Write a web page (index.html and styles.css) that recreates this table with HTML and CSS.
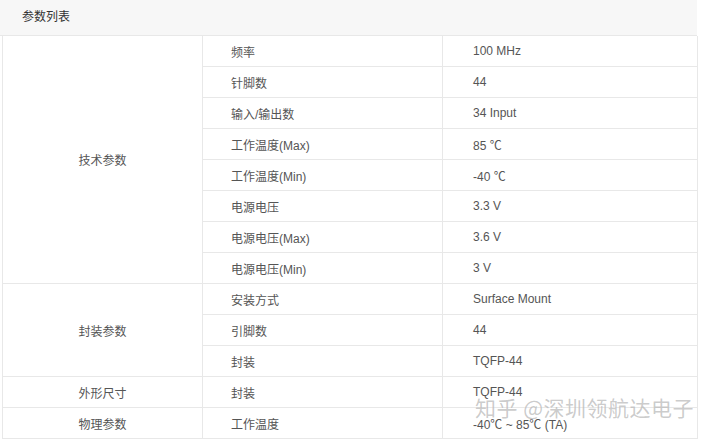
FILE: index.html
```html
<!DOCTYPE html>
<html lang="zh">
<head>
<meta charset="utf-8">
<title>参数列表</title>
<link rel="stylesheet" href="styles.css">
</head>
<body>
<div class="page">
  <div class="panel-head">参数列表</div>
  <table class="params">
    <colgroup>
      <col class="c1"><col class="c2"><col class="c3">
    </colgroup>
    <tbody>
      <tr><td class="group" rowspan="8">技术参数</td><td class="name">频率</td><td class="val">100 MHz</td></tr>
      <tr><td class="name">针脚数</td><td class="val">44</td></tr>
      <tr><td class="name">输入/输出数</td><td class="val">34 Input</td></tr>
      <tr><td class="name">工作温度(Max)</td><td class="val">85 ℃</td></tr>
      <tr><td class="name">工作温度(Min)</td><td class="val">-40 ℃</td></tr>
      <tr><td class="name">电源电压</td><td class="val">3.3 V</td></tr>
      <tr><td class="name">电源电压(Max)</td><td class="val">3.6 V</td></tr>
      <tr><td class="name">电源电压(Min)</td><td class="val">3 V</td></tr>
      <tr><td class="group" rowspan="3">封装参数</td><td class="name">安装方式</td><td class="val">Surface Mount</td></tr>
      <tr><td class="name">引脚数</td><td class="val">44</td></tr>
      <tr><td class="name">封装</td><td class="val">TQFP-44</td></tr>
      <tr><td class="group">外形尺寸</td><td class="name">封装</td><td class="val">TQFP-44</td></tr>
      <tr><td class="group">物理参数</td><td class="name">工作温度</td><td class="val">-40℃ ~ 85℃ (TA)</td></tr>
    </tbody>
  </table>
  <div class="watermark">知乎 @深圳领航达电子</div>
</div>
</body>
</html>
```
FILE: styles.css
```css
html, body {
  margin: 0;
  padding: 0;
  background: #fff;
}
body {
  font-family: "Liberation Sans", "Noto Sans CJK SC", sans-serif;
  font-size: 12px;
  color: #555;
}
.page {
  position: relative;
  width: 706px;
  height: 440px;
  overflow: hidden;
}
.panel-head {
  box-sizing: border-box;
  width: 697px;
  height: 36px;
  line-height: 34px;
  padding-left: 22px;
  background: #f7f7f7;
  border-bottom: 1px solid #e8e8e8;
  color: #333;
}
.params {
  margin-left: 2px;
  border-collapse: separate;
  border-spacing: 0;
  table-layout: fixed;
  width: 696px;
  border-left: 1px solid #e8e8e8;
}
.c1 { width: 200px; }
.c2 { width: 240px; }
.c3 { width: 255px; }
.params td {
  box-sizing: border-box;
  height: 31px;
  padding: 0;
  border-right: 1px solid #e8e8e8;
  border-bottom: 1px solid #e8e8e8;
  vertical-align: middle;
  white-space: nowrap;
}
.params td.group {
  text-align: center;
}
.params td.name {
  padding-left: 28px;
}
.params td.val {
  padding-left: 30px;
}
.watermark {
  position: absolute;
  left: 475px;
  top: 394px;
  font-family: "Noto Sans CJK SC", sans-serif;
  font-size: 21px;
  line-height: 26px;
  letter-spacing: 0.5px;
  color: rgba(140, 140, 140, 0.45);
  text-shadow: 0 0 1px rgba(255, 255, 255, 0.6);
  white-space: nowrap;
}
```
